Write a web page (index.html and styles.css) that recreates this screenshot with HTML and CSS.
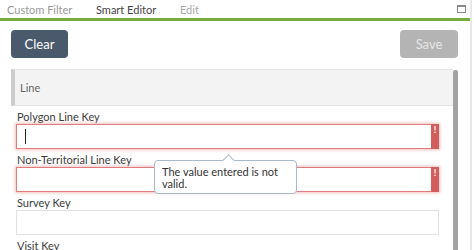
FILE: index.html
```html
<!DOCTYPE html>
<html>
<head>
<meta charset="utf-8">
<link rel="stylesheet" href="styles.css">
</head>
<body>
<div class="app">
  <div class="tabs">
    <span class="tab tab-filter">Custom Filter</span>
    <span class="tab tab-active">Smart Editor</span>
    <span class="tab tab-edit">Edit</span>
    <span class="maximize"></span>
  </div>
  <div class="accent"></div>
  <div class="toolbar">
    <button class="btn btn-clear">Clear</button>
    <button class="btn btn-save">Save</button>
  </div>
  <div class="panel">
    <div class="content">
      <div class="group-header">Line</div>
      <div class="field">
        <label class="field-label">Polygon Line Key</label>
        <div class="input invalid"><span class="caret"></span><span class="flag">!</span></div>
      </div>
      <div class="field">
        <label class="field-label">Non-Territorial Line Key</label>
        <div class="input invalid"><span class="flag">!</span></div>
      </div>
      <div class="field">
        <label class="field-label">Survey Key</label>
        <div class="input"></div>
      </div>
      <div class="field">
        <label class="field-label">Visit Key</label>
        <div class="input"></div>
      </div>
      <div class="tooltip">The value entered is not valid.</div>
    </div>
    <div class="scrollbar"></div>
  </div>
</div>
</body>
</html>
```
FILE: styles.css
```css
html, body {
  margin: 0;
  padding: 0;
  background: #fff;
}
body {
  width: 474px;
  height: 250px;
  overflow: hidden;
  font-family: Lato, "Open Sans", sans-serif;
}
.app {
  width: 470px;
  height: 250px;
  border-right: 2px solid #e8e8e8;
  display: flex;
  flex-direction: column;
  overflow: hidden;
}
.tabs {
  height: 18px;
  display: flex;
  align-items: center;
  padding-left: 7px;
  font-size: 11px;
}
.tab { white-space: nowrap; }
.tab-filter { width: 89px; color: #9a9a9a; }
.tab-active { width: 84px; color: #444; }
.tab-edit { color: #aaa; }
.maximize {
  margin-left: auto;
  margin-right: 4px;
  width: 7px;
  height: 5px;
  border: 1px solid #8a8a8a;
  border-top-width: 2px;
}
.accent {
  height: 3px;
  background: #74ad3c;
}
.toolbar {
  display: flex;
  justify-content: space-between;
  padding: 9px 12px 0 11px;
}
.btn {
  height: 28px;
  border: none;
  border-radius: 4px;
  font-family: inherit;
  font-size: 13px;
  padding: 0;
}
.btn-clear {
  width: 57px;
  background: #4b596d;
  color: #fff;
}
.btn-save {
  width: 58px;
  background: #b4b4b4;
  color: #e6e6e6;
}
.panel {
  margin-top: 11px;
  margin-left: 11px;
  display: flex;
  flex: 1;
  min-height: 0;
  overflow: hidden;
}
.content {
  flex: 1;
  position: relative;
}
.scrollbar {
  width: 5px;
  margin-top: 1px;
  margin-right: 12px;
  background: #a3a3a3;
  border-radius: 2px 2px 0 0;
}
.group-header {
  height: 35px;
  display: flex;
  align-items: center;
  padding-left: 5px;
  background: #f3f3f3;
  border-top: 1px solid #e4e4e4;
  border-bottom: 1px solid #e4e4e4;
  border-left: 4px solid #cdcdcd;
  font-size: 11px;
  color: #666;
}
.field {
  padding: 4px 14px 0 5px;
}
.field:first-of-type { padding-top: 5px; }
.field-label {
  display: block;
  padding-left: 1px;
  height: 14px;
  line-height: 14px;
  font-size: 11px;
  color: #3c3c3c;
}
.input {
  height: 23px;
  margin-top: 0;
  border: 1px solid #e2e2e2;
  position: relative;
  background: #fff;
}
.input.invalid {
  border-color: #dd7d7d;
  box-shadow: 0 0 3px 1px rgba(226, 110, 110, 0.45);
}
.caret {
  position: absolute;
  left: 8px;
  top: 4px;
  width: 1px;
  height: 15px;
  background: #222;
}
.flag {
  position: absolute;
  right: -1px;
  top: -1px;
  width: 8px;
  height: 25px;
  background: #d35c5c;
  color: #fff;
  font-size: 9px;
  font-weight: bold;
  line-height: 12px;
  text-align: center;
}
.tooltip {
  position: absolute;
  left: 143px;
  top: 91px;
  width: 127px;
  padding: 5px 7px 3px 7px;
  background: #fff;
  border: 1px solid #a9b9c9;
  border-radius: 4px;
  font-size: 11px;
  line-height: 12px;
  color: #333;
}
.tooltip::before {
  content: "";
  position: absolute;
  left: 69px;
  top: -5px;
  width: 8px;
  height: 8px;
  background: #fff;
  border-top: 1px solid #a9b9c9;
  border-left: 1px solid #a9b9c9;
  transform: rotate(45deg);
}
```
